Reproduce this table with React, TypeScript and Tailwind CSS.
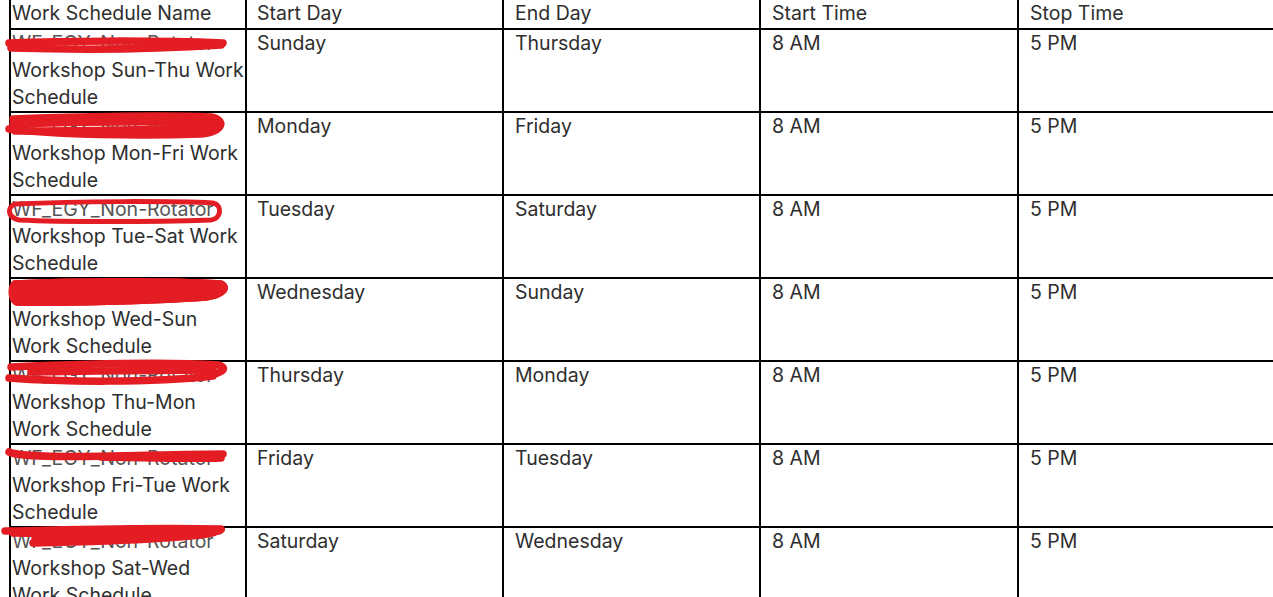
import React from 'react';

type Row = {
  name: string[];
  start: string;
  end: string;
  scribble: React.ReactNode;
};

const RED = '#e31d23';

const rows: Row[] = [
  {
    name: ['Workshop Sun-Thu Work', 'Schedule'],
    start: 'Sunday',
    end: 'Thursday',
    scribble: (
      <>
        <path d="M8 13 C 60 11, 150 10, 222 13" />
        <path d="M10 18 C 80 20, 160 19, 220 15" />
      </>
    ),
  },
  {
    name: ['Workshop Mon-Fri Work', 'Schedule'],
    start: 'Monday',
    end: 'Friday',
    scribble: (
      <>
        <path d="M12 6 C 80 3, 170 2, 210 4 C 226 7, 222 19, 200 21 C 140 23, 60 22, 8 16" />
        <path d="M12 11 C 80 9, 160 8, 214 10" />
        <path d="M14 18 C 80 18, 150 17, 214 14" />
      </>
    ),
  },
  {
    name: ['Workshop Tue-Sat Work', 'Schedule'],
    start: 'Tuesday',
    end: 'Saturday',
    scribble: (
      <path
        strokeWidth={5}
        d="M14 8 C 80 5, 170 5, 212 7 C 222 9, 220 23, 210 24 C 150 26, 60 26, 18 24 C 6 21, 6 11, 14 8 Z"
      />
    ),
  },
  {
    name: ['Workshop Wed-Sun', 'Work Schedule'],
    start: 'Wednesday',
    end: 'Sunday',
    scribble: (
      <>
        <path
          fill={RED}
          d="M14 5 C 80 2, 170 2, 220 5 C 228 9, 220 16, 205 18 C 150 22, 60 24, 16 23 C 10 20, 10 9, 14 5 Z"
        />
        <path d="M14 5 C 80 2, 170 2, 220 5 C 228 9, 220 16, 205 18 C 150 22, 60 24, 16 23" />
      </>
    ),
  },
  {
    name: ['Workshop Thu-Mon', 'Work Schedule'],
    start: 'Thursday',
    end: 'Monday',
    scribble: (
      <>
        <path d="M10 5 C 80 2, 170 0, 218 3 C 230 7, 216 13, 200 15" />
        <path d="M8 16 C 60 20, 150 21, 212 14" />
        <path d="M30 10 C 90 9, 160 8, 212 8" />
      </>
    ),
  },
  {
    name: ['Workshop Fri-Tue Work', 'Schedule'],
    start: 'Friday',
    end: 'Tuesday',
    scribble: (
      <>
        <path d="M8 7 C 20 12, 60 12, 110 11 C 160 10, 200 9, 222 9" />
        <path d="M100 12 C 150 13, 190 14, 220 13" />
      </>
    ),
  },
  {
    name: ['Workshop Sat-Wed', 'Work Schedule'],
    start: 'Saturday',
    end: 'Wednesday',
    scribble: (
      <>
        <path d="M4 3 C 60 2, 150 -1, 220 1 C 224 4, 190 7, 40 9" />
        <path d="M12 5 C 80 7, 160 5, 218 3" />
        <path d="M34 11 C 90 10, 160 8, 214 4 C 200 10, 120 13, 32 15" />
      </>
    ),
  },
];

const cell = 'border-2 border-black align-top p-0 leading-[27px]';

export default function App() {
  return (
    <div
      className="w-[1273px] h-[597px] overflow-hidden bg-white text-[#2e2e2e] text-[19.5px]"
      style={{ fontFamily: 'Inter, "Noto Sans", sans-serif' }}
    >
      <table className="ml-[9px] -mt-[2px] border-collapse table-fixed w-[1320px]">
        <colgroup>
          <col className="w-[236px]" />
          <col className="w-[257px]" />
          <col className="w-[257px]" />
          <col className="w-[258px]" />
          <col className="w-[312px]" />
        </colgroup>
        <thead>
          <tr className="h-[30px]">
            <th className={`${cell} pl-[1px] font-normal text-left`}>Work Schedule Name</th>
            <th className={`${cl('pl-[10px]')} font-normal text-left`}>Start Day</th>
            <th className={`${cl('pl-[11px]')} font-normal text-left`}>End Day</th>
            <th className={`${cl('pl-[11px]')} font-normal text-left`}>Start Time</th>
            <th className={`${cl('pl-[11px]')} font-normal text-left`}>Stop Time</th>
          </tr>
        </thead>
        <tbody>
          {rows.map((r, i) => (
            <tr key={i} className="h-[83px]">
              <td className={`${cell} pl-[1px] relative`}>
                <div className="whitespace-nowrap text-[#555]">WF_EGY_Non-Rotator</div>
                {r.name.map((l, j) => (
                  <div key={j} className="whitespace-nowrap">
                    {l}
                  </div>
                ))}
                <svg
                  className="absolute left-[-10px] top-0 overflow-visible pointer-events-none"
                  width="240"
                  height="30"
                  viewBox="0 0 240 30"
                  fill="none"
                  stroke={RED}
                  strokeWidth={7.5}
                  strokeLinecap="round"
                  strokeLinejoin="round"
                >
                  {r.scribble}
                </svg>
              </td>
              <td className={cl('pl-[10px]')}>{r.start}</td>
              <td className={cl('pl-[11px]')}>{r.end}</td>
              <td className={cl('pl-[11px]')}>8 AM</td>
              <td className={cl('pl-[11px]')}>5 PM</td>
            </tr>
          ))}
        </tbody>
      </table>
    </div>
  );
}

function cl(extra: string) {
  return `${cell} ${extra}`;
}
